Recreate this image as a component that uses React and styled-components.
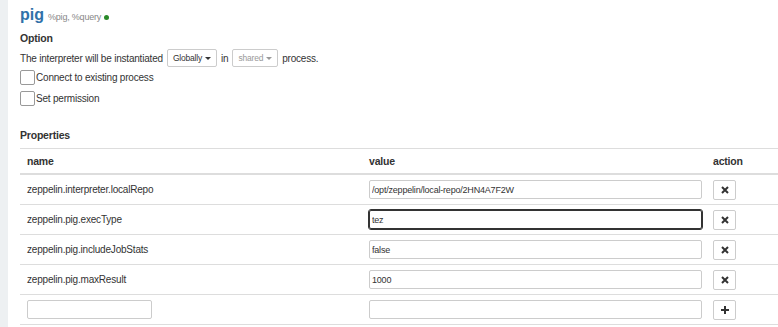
import React from 'react';
import styled, { createGlobalStyle } from 'styled-components';

const GlobalStyle = createGlobalStyle`
  body {
    margin: 0;
    background: #edf0f2;
    font-family: "Liberation Sans", Arial, sans-serif;
    color: #333;
  }
`;

const Page = styled.div`
  display: flex;
  height: 327px;
  overflow: hidden;
`;

const Panel = styled.div`
  flex: 1;
  margin-left: 8px;
  background: #fff;
  padding: 6px 0 0 12px;
  font-size: 10px;
  letter-spacing: -0.2px;
`;

const TitleRow = styled.div`
  display: flex;
  align-items: baseline;
  gap: 4px;
  height: 22px;
`;

const Title = styled.span`
  color: #3071a9;
  font-size: 16px;
  font-weight: bold;
  letter-spacing: 0;
`;

const Bindings = styled.span`
  color: #888;
  font-size: 9px;
`;

const StatusDot = styled.span`
  display: inline-block;
  width: 5px;
  height: 5px;
  border-radius: 50%;
  background: #2a8a2a;
  margin-left: -1px;
`;

const SectionTitle = styled.div`
  font-weight: bold;
  font-size: 10.5px;
  margin: ${p => p.top || 0}px 0 ${p => p.bottom || 0}px;
`;

const InstantiateRow = styled.div`
  display: flex;
  align-items: center;
  gap: 4px;
  height: 18px;
  margin-top: 5px;
`;

const Dropdown = styled.span`
  display: inline-flex;
  align-items: center;
  gap: 3px;
  height: 16px;
  padding: 0 5px;
  border: 1px solid #ccc;
  border-radius: 2px;
  font-size: 8.5px;
  color: ${p => (p.disabled ? '#999' : '#333')};
  &::after {
    content: '';
    border-left: 3px solid transparent;
    border-right: 3px solid transparent;
    border-top: 3px solid ${p => (p.disabled ? '#999' : '#333')};
  }
`;

const CheckRow = styled.label`
  display: flex;
  align-items: center;
  height: 21px;
`;

const Box = styled.span`
  width: 13px;
  height: 13px;
  border: 1px solid #999;
  border-radius: 2px;
  margin-right: 1px;
`;

const Table = styled.table`
  width: calc(100% + 20px);
  border-collapse: collapse;
  border-top: 1px solid #ddd;
  th, td {
    text-align: left;
    padding: 0 4px 0 7px;
    border-bottom: 1px solid #ddd;
    height: 29px;
  }
  th {
    height: 24px;
    font-size: 10.5px;
    border-bottom: 2px solid #ddd;
  }
`;

const TextInput = styled.input`
  box-sizing: border-box;
  width: ${p => p.width || '100%'};
  height: 19px;
  padding: 0 2px;
  border: 1px solid ${p => (p.focused ? '#333' : '#ccc')};
  border-radius: 2px;
  font-family: inherit;
  font-size: 9px;
  letter-spacing: -0.2px;
  color: #333;
  outline: ${p => (p.focused ? '1px solid #333' : 'none')};
`;

const IconButton = styled.button`
  width: 23px;
  height: 20px;
  border: 1px solid #ccc;
  border-radius: 2px;
  background: #fff;
  display: flex;
  align-items: center;
  justify-content: center;
  padding: 0;
  svg { display: block; }
`;

const Cross = () => (
  <svg width="8" height="8" viewBox="0 0 8 8">
    <path d="M1 1 L7 7 M7 1 L1 7" stroke="#333" strokeWidth="2" />
  </svg>
);

const Plus = () => (
  <svg width="8" height="8" viewBox="0 0 8 8">
    <path d="M4 0 V8 M0 4 H8" stroke="#333" strokeWidth="2" />
  </svg>
);

const properties = [
  { name: 'zeppelin.interpreter.localRepo', value: '/opt/zeppelin/local-repo/2HN4A7F2W' },
  { name: 'zeppelin.pig.execType', value: 'tez', focused: true },
  { name: 'zeppelin.pig.includeJobStats', value: 'false' },
  { name: 'zeppelin.pig.maxResult', value: '1000' },
];

export default function App() {
  return (
    <Page>
      <GlobalStyle />
      <Panel>
        <TitleRow>
          <Title>pig</Title>
          <Bindings>%pig, %query</Bindings>
          <StatusDot />
        </TitleRow>
        <SectionTitle top={4}>Option</SectionTitle>
        <InstantiateRow>
          The interpreter will be instantiated
          <Dropdown>Globally</Dropdown>
          in
          <Dropdown disabled>shared</Dropdown>
          process.
        </InstantiateRow>
        <CheckRow><Box />Connect to existing process</CheckRow>
        <CheckRow><Box />Set permission</CheckRow>
        <SectionTitle top={20} bottom={7}>Properties</SectionTitle>
        <Table>
          <colgroup>
            <col style={{ width: 342 }} />
            <col style={{ width: 344 }} />
            <col />
          </colgroup>
          <thead>
            <tr><th>name</th><th>value</th><th>action</th></tr>
          </thead>
          <tbody>
            {properties.map(p => (
              <tr key={p.name}>
                <td>{p.name}</td>
                <td><TextInput defaultValue={p.value} focused={p.focused} /></td>
                <td><IconButton><Cross /></IconButton></td>
              </tr>
            ))}
            <tr>
              <td><TextInput width="125px" /></td>
              <td><TextInput /></td>
              <td><IconButton><Plus /></IconButton></td>
            </tr>
          </tbody>
        </Table>
      </Panel>
    </Page>
  );
}
